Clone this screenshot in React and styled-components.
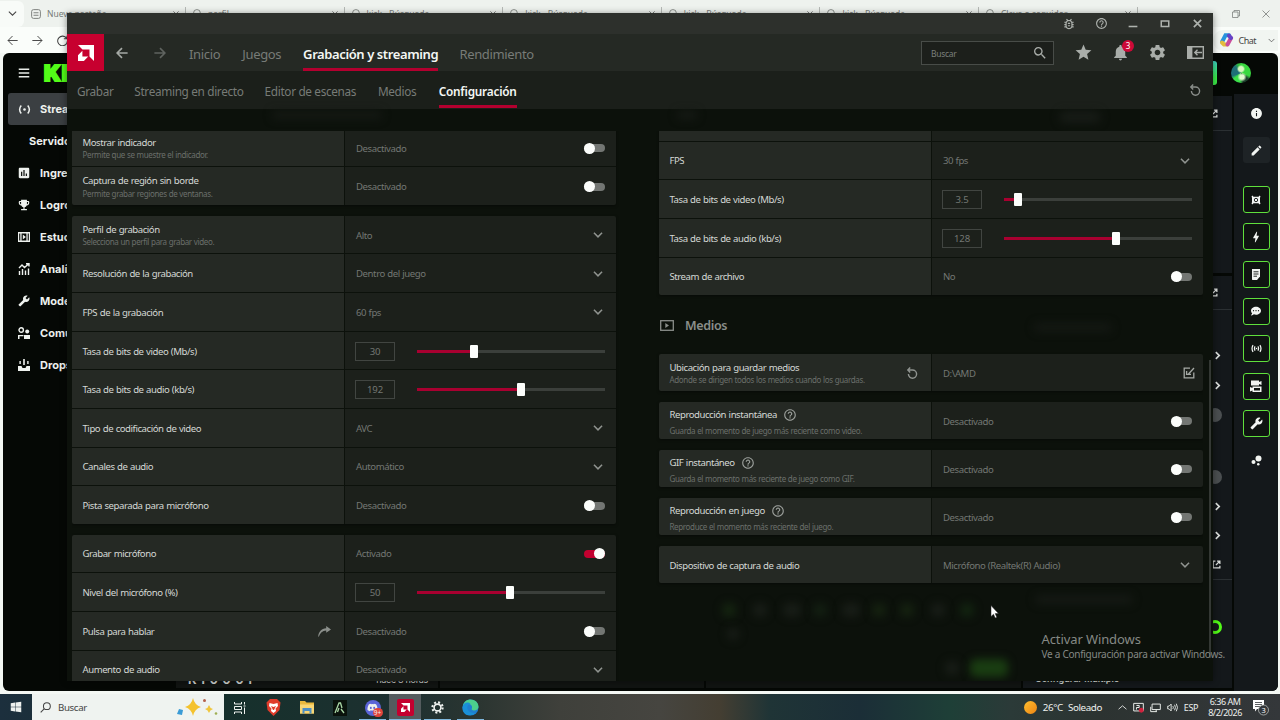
import React from 'react';
import styled, { createGlobalStyle, css } from 'styled-components';
import {
  MdOutlineBugReport,
  MdHelpOutline,
  MdStar,
  MdNotifications,
  MdSettings,
  MdSearch,
  MdInsertChart,
  MdEmojiEvents,
  MdBuild,
  MdEdit,
  MdInfo,
  MdBolt,
  MdBubbleChart,
} from 'react-icons/md';
import { FaDiscord, FaWindows, FaCommentDots } from 'react-icons/fa';

const GlobalStyle = createGlobalStyle`
  * {
    box-sizing: border-box;
  }

  body {
    margin: 0;
    overflow: hidden;
    font-family: 'Noto Sans', 'Open Sans', sans-serif;
  }

  svg {
    display: block;
    flex: none;
  }
`;

const Desktop = styled.div`
  position: relative;
  display: flex;
  flex-direction: column;
  width: 1280px;
  height: 720px;
  overflow: hidden;
  background: #f4f8f4;
`;

/* ---------- browser behind ---------- */

const TabStrip = styled.div`
  display: flex;
  align-items: center;
  height: 27px;
  background: #eef2ee;
  color: #777b78;
  font-size: 8.5px;
`;

const TabMenu = styled.div`
  display: flex;
  align-items: center;
  justify-content: center;
  width: 24px;
  height: 26px;
  background: #f8fbf8;
  color: #444;
  border-radius: 0 6px 6px 0;
`;

const BrowserTab = styled.div`
  display: flex;
  align-items: center;
  gap: 6px;
  width: ${(props) => props.$width || 158.6}px;
  height: 14px;
  padding: 0 6px 0 7px;
  border-right: 1px solid #b5b9b5;

  span {
    flex: 1;
    white-space: nowrap;
  }

  svg:last-child {
    color: #333;
  }
`;

const WindowButtons = styled.div`
  display: flex;
  gap: 22px;
  margin-left: auto;
  padding-right: 10px;
`;

const BrowserBar = styled.div`
  display: flex;
  align-items: center;
  gap: 14px;
  height: 26px;
  padding-left: 7px;
  background: #fafdfa;
  color: #444;
`;

const ChatPill = styled.div`
  display: flex;
  align-items: center;
  gap: 4px;
  height: 21px;
  margin: 0 2px 0 auto;
  padding: 0 3px 0 6px;
  border-radius: 10px 0 0 10px;
  background: #f1f5f1;
  color: #444;
  font-size: 9px;
  letter-spacing: -0.5px;

  svg:last-child {
    margin-left: 8px;
  }
`;

const KickPage = styled.div`
  display: flex;
  flex-direction: column;
  height: 638px;
  margin: 0 2px 3px 3px;
  overflow: hidden;
  border-radius: 6px;
  background: #050805;
  font-family: Inter, sans-serif;
`;

const KickHeader = styled.div`
  display: flex;
  align-items: center;
  height: 41px;
  padding: 0 27px 1px 15px;
  color: #e8ebe8;
`;

const KickLogo = styled.div`
  margin-left: 14px;
  color: #53fc18;
  font-size: 22px;
  font-weight: 900;
  line-height: 24px;
  letter-spacing: 1px;
  -webkit-text-stroke: 2px #53fc18;
`;

const LiveButton = styled.div`
  width: 60px;
  height: 24px;
  margin-left: auto;
  border-radius: 3px;
  background: linear-gradient(#3fd6c6, #3df04a 70%);
`;

const Avatar = styled.div`
  width: 20px;
  height: 20px;
  margin-left: 14px;
  border-radius: 50%;
  background: radial-gradient(circle at 50% 30%, #d8f7c0 0 14%, transparent 24%),
    radial-gradient(circle at 55% 70%, #e2fbd0 0 12%, transparent 26%),
    conic-gradient(#39d83f 0 30%, #1d3f2c 36% 46%, #3be04a 52% 64%, #1f6f78 70% 88%, #35c83a 96%);
`;

const KickBody = styled.div`
  display: flex;
  flex: 1;
  min-height: 0;
`;

const Sidebar = styled.div`
  width: 173px;
  margin-top: -1px;
  padding: 0 0 0 5px;
`;

const SideItem = styled.div`
  display: flex;
  align-items: center;
  gap: 8px;
  height: 32px;
  padding-left: ${(props) => (props.$inset ? 21 : 8)}px;
  border-radius: 3px;
  background: ${(props) => (props.$active ? '#3b3f42' : 'transparent')};
  color: #eef1ee;
  font-size: 11px;
  font-weight: 700;
`;

const SideIcon = styled.div`
  display: flex;
  justify-content: center;
  width: 16px;
`;

const Panel = styled.div`
  display: flex;
  align-items: flex-end;
  justify-content: space-between;
  width: ${(props) => props.$width}px;
  margin: 0 2px 3px 0;
  padding: 0 10px 3px 12px;
  background: #111412;
  color: #d5d8d5;
  font-size: 9px;
  line-height: 10px;
  letter-spacing: -0.3px;

  strong {
    font-size: 12px;
    letter-spacing: 1px;
  }
`;

const ActionColumn = styled.div`
  display: flex;
  flex-direction: column;
  gap: 3px;
  width: 209px;
  margin: 2px 2px 3px 0;
`;

const ActionPanel = styled.div`
  display: flex;
  flex-direction: column;
  height: ${(props) => (props.$height ? `${props.$height}px` : 'auto')};
  flex: ${(props) => (props.$height ? 'none' : 1)};
  padding-right: 10px;
  background: #14181b;
  color: #dfe2df;
  font-size: 9px;
  font-weight: 600;
`;

const ActionRow = styled.div`
  display: flex;
  align-items: center;
  justify-content: flex-end;
  height: ${(props) => props.$height || 29.6}px;
  margin-right: ${(props) => (props.$line ? -10 : 0)}px;
  padding-right: ${(props) => (props.$line ? props.$pad || 10 : 0)}px;
  border-bottom: ${(props) => (props.$line ? '1px solid #2b3033' : 'none')};
`;

const PanelFoot = styled.div`
  margin-top: auto;
  padding: 0 0 4px 12px;
  line-height: 10px;
`;

const Knob = styled.div`
  width: 14px;
  height: 14px;
  border: ${(props) => (props.$on ? '3px solid #53fc18' : 'none')};
  border-radius: 50%;
  background: ${(props) => (props.$on ? 'transparent' : '#4b4f51')};
`;

const Rail = styled.div`
  display: flex;
  flex-direction: column;
  align-items: center;
  gap: 11.3px;
  flex: 1;
  padding-top: 6px;
  background: #14181b;
`;

const RailButton = styled.div`
  display: flex;
  align-items: center;
  justify-content: center;
  width: 27px;
  height: 26px;
  border-radius: 3px;
  color: #f2f5f2;
  ${(props) =>
    props.$outlined &&
    css`
      height: 27px;
      margin-bottom: -1px;
      border: 1px solid #5fe03c;
      background: #0f1411;
    `}
  ${(props) =>
    props.$raised &&
    css`
      margin-bottom: 11.5px;
      background: #1e2326;
    `}
`;

/* ---------- settings window ---------- */

const AppWindow = styled.div`
  position: absolute;
  left: 67px;
  top: 13px;
  display: flex;
  flex-direction: column;
  width: 1146px;
  height: 667.5px;
  overflow: hidden;
  background: #0c110b;
  color: #8a8e8a;
`;

const WindowShadow = styled.div`
  position: absolute;
  left: 67px;
  top: 13px;
  width: 1146px;
  height: 667px;
  box-shadow: 0 1px 7px rgba(0, 0, 0, 0.45);
`;

const TitleBar = styled.div`
  display: flex;
  align-items: center;
  justify-content: flex-end;
  height: 21px;
  background: #2d302c;
  color: #aeb2ae;
`;

const TitleButton = styled.div`
  display: flex;
  justify-content: center;
  width: 32px;
`;

const NavBar = styled.div`
  display: flex;
  align-items: center;
  height: 37px;
  background: #252924;
`;

const Brand = styled.div`
  display: flex;
  align-items: center;
  justify-content: center;
  width: 37px;
  height: 37px;
  margin-right: 12px;
  background: #c7002f;
`;

const Arrow = styled.div`
  width: ${(props) => (props.$dim ? 35 : 38)}px;
  color: ${(props) => (props.$dim ? '#5f635f' : '#a5a9a5')};
`;

const Tab = styled.div`
  display: flex;
  align-items: center;
  width: ${(props) => props.$width}px;
  height: 100%;
  margin-right: 21.3px;
  padding-top: ${(props) => (props.$active ? 5 : 2)}px;
  border-bottom: ${(props) => (props.$active ? '3px solid #b3002f' : 'none')};
  color: ${(props) => (props.$active ? '#f4f7f4' : '#777b77')};
  font-size: ${(props) => (props.$small ? 11.8 : 13)}px;
  font-weight: ${(props) => (props.$active ? 600 : 400)};
  letter-spacing: ${(props) => (props.$active && !props.$small ? -0.4 : props.$active ? -0.22 : -0.34)}px;
  white-space: nowrap;
`;

const NavTools = styled.div`
  display: flex;
  align-items: center;
  margin-left: auto;
  padding-right: 9px;
  gap: 18px;
  color: #a9ada9;

  > svg:last-child {
    margin-left: 2px;
  }
`;

const SearchBox = styled.div`
  display: flex;
  align-items: center;
  justify-content: space-between;
  width: 133px;
  height: 24px;
  margin: 1px 2px 0 0;
  padding: 0 5px 0 9px;
  border: 1px solid #484c48;
  background: #1c1f1b;
  color: #7b7f7b;
  font-size: 8.5px;
  letter-spacing: -0.3px;

  svg {
    color: #a9ada9;
  }
`;

const Bell = styled.div`
  position: relative;
`;

const Badge = styled.div`
  position: absolute;
  right: -4px;
  top: -3px;
  width: 12px;
  height: 12px;
  border-radius: 50%;
  background: #cc0a38;
  color: #fff;
  font-size: 8px;
  line-height: 12px;
  text-align: center;
`;

const SubNav = styled.div`
  display: flex;
  align-items: center;
  height: 38px;
  padding: 0 12px 1px 10px;
  background: #1b1f1a;

  > svg {
    margin-left: auto;
  }
`;

const Content = styled.div`
  position: relative;
  flex: 1;
  min-height: 0;
  padding: 22px 10px 0 5px;
`;

const Viewport = styled.div`
  display: flex;
  gap: 43px;
  height: 550px;
  overflow: hidden;
`;

const Column = styled.div`
  position: relative;
  width: 544px;
  margin-top: ${(props) => props.$shift}px;
`;

const Group = styled.div`
  display: flex;
  flex-direction: column;
  gap: 1px;
  margin-bottom: 10.6px;
  overflow: hidden;
  border-radius: 2px;
  box-shadow: 0 1px 3px rgba(0, 0, 0, 0.4);
`;

const Row = styled.div`
  display: grid;
  grid-template-columns: 272px 271px;
  gap: 1px;
  height: ${(props) => props.$height || 37.67}px;
`;

const LabelCell = styled.div`
  display: flex;
  align-items: center;
  justify-content: space-between;
  padding: 1px 13px 0 10.5px;
  background: #252924;
  color: #8f938f;
`;

const Name = styled.div`
  display: flex;
  align-items: center;
  gap: 6px;
  height: 14px;
  color: #d4d8d4;
  font-size: 9.6px;
  letter-spacing: -0.46px;
  word-spacing: 0.5px;
  white-space: nowrap;

  svg {
    color: #9a9e9a;
  }
`;

const Hint = styled.div`
  height: 12px;
  margin-top: ${(props) => (props.$low ? 3 : 0)}px;
  margin-bottom: ${(props) => (props.$low ? -2 : 0)}px;
  color: #6b6f6b;
  font-size: 8px;
  line-height: 12px;
  letter-spacing: -0.36px;
  word-spacing: 0.3px;
  white-space: nowrap;
`;

const ValueCell = styled.div`
  display: flex;
  align-items: center;
  justify-content: space-between;
  padding: 1px 11px 0;
  background: #1c201b;
  color: #737773;
  font-size: 9.6px;
  letter-spacing: -0.42px;
  word-spacing: 0.3px;
`;

const SelectArrow = styled.div`
  margin-right: 2.5px;
  color: #8f938f;
`;

const FolderButton = styled.div`
  margin-right: -3px;
  color: #a5a9a5;
`;

const Switch = styled.div`
  display: flex;
  align-items: center;
  justify-content: ${(props) => (props.$on ? 'flex-end' : 'flex-start')};
  width: 21px;
  height: 8px;
  border-radius: 4px;
  background: ${(props) => (props.$on ? '#c2002f' : '#737673')};

  &::after {
    content: '';
    width: 11px;
    height: 11px;
    border-radius: 50%;
    background: #fbfdfb;
  }
`;

const NumberBox = styled.div`
  display: flex;
  align-items: center;
  justify-content: center;
  width: 40px;
  height: 19px;
  margin-left: -1px;
  border: 1px solid #414541;
  letter-spacing: -0.2px;
`;

const Track = styled.div`
  display: flex;
  align-items: center;
  width: 188px;
  height: 13px;
  background: linear-gradient(#3b3f3b, #3b3f3b) center / 100% 3px no-repeat;
`;

const Filled = styled.div`
  height: 3px;
  background: #a80030;
`;

const Thumb = styled.div`
  width: 8px;
  height: 13px;
  border-radius: 1px;
  background: #fbfdfb;
`;

const SectionTitle = styled.div`
  display: flex;
  align-items: center;
  gap: 11px;
  height: 38px;
  margin-bottom: 10px;
  padding: 1px 0 0 1px;
  color: #8a8e8a;
  font-size: 12.5px;
  font-weight: 600;
  letter-spacing: -0.35px;
`;

const ScrollThumb = styled.div`
  position: absolute;
  right: 2px;
  top: 251px;
  width: 2px;
  height: 298px;
  background: #343834;
`;

const Glow = styled.div`
  position: absolute;
  left: ${(props) => props.$x}px;
  top: ${(props) => props.$y}px;
  width: ${(props) => props.$w || 14}px;
  height: ${(props) => props.$h || 14}px;
  border-radius: 6px;
  background: ${(props) => props.$color || '#181d17'};
  filter: blur(4px);
`;

/* ---------- taskbar ---------- */

const TaskBar = styled.div`
  display: flex;
  align-items: center;
  height: 26px;
  background: linear-gradient(
    90deg,
    #1c2f3d 0,
    #16302c 224px,
    #1d3030 400px,
    #2b3531 480px,
    #3f403b 560px,
    #464540 660px,
    #443e32 720px,
    #1f3436 770px,
    #1b2e37 860px,
    #1e3f37 950px,
    #2b3a38 1010px,
    #2c3331 1100px,
    #34373a 1280px
  );
  color: #eef1ee;
`;

const StartButton = styled.div`
  display: flex;
  align-items: center;
  justify-content: center;
  width: 32px;
`;

const TaskSearch = styled.div`
  display: flex;
  align-items: center;
  gap: 7px;
  width: 192px;
  height: 26px;
  padding: 0 6px 0 8px;
  background: #eff3f0;
  color: #444;
  font-size: 9.7px;
  letter-spacing: -0.35px;

  svg:last-child {
    margin-left: auto;
  }
`;

const TaskItem = styled.div`
  display: flex;
  align-items: center;
  justify-content: center;
  width: ${(props) => props.$width || 33}px;
  height: 26px;
  padding-top: 1px;
  ${(props) =>
    props.$open &&
    css`
      background: linear-gradient(#7fb8dd, #7fb8dd) center bottom / 27px 1px no-repeat;
    `}
  ${(props) =>
    props.$focused &&
    css`
      border-bottom: 1px solid #7fb8dd;
      background: #545c5e;
    `}
`;

const DiscordIcon = styled.div`
  position: relative;
  display: flex;
  align-items: center;
  justify-content: center;
  width: 16px;
  height: 16px;
  border-radius: 50%;
  background: #5b65d8;

  span {
    position: absolute;
    right: -2px;
    bottom: -1px;
    width: 10px;
    height: 9px;
    border-radius: 5px;
    background: #e0443c;
    font-size: 6.5px;
    line-height: 9px;
    text-align: center;
  }
`;

const AmdTile = styled.div`
  display: flex;
  align-items: center;
  justify-content: center;
  width: 17px;
  height: 17px;
  border-radius: 2px;
  background: #c4002f;
`;

const AdrenalinTile = styled.div`
  width: 14px;
  height: 16px;
  background: #0a120c;
`;

const Tray = styled.div`
  display: flex;
  align-items: center;
  gap: 6px;
  margin-left: auto;
  padding-right: 10px;
  font-size: 9px;
  letter-spacing: -0.4px;
  white-space: nowrap;
`;

const Sun = styled.div`
  width: 13px;
  height: 13px;
  border-radius: 50%;
  background: linear-gradient(135deg, #ffbf2e, #ee8414);
`;

const Weather = styled.span`
  width: 69px;
  font-size: 9.8px;
  word-spacing: 3px;
`;

const Clock = styled.div`
  display: flex;
  flex-direction: column;
  align-items: center;
  width: 34px;
  margin: 0 4px;
  font-size: 9px;
  line-height: 11.5px;
  letter-spacing: -0.5px;
`;

/* ---------- overlays ---------- */

const Watermark = styled.div`
  position: absolute;
  left: 1041.5px;
  top: 630px;
  color: #858985;
  font-size: 10px;
  line-height: 12px;
  letter-spacing: -0.27px;
  white-space: nowrap;

  strong {
    display: block;
    font-size: 13px;
    font-weight: 400;
    line-height: 18px;
    letter-spacing: -0.1px;
  }
`;

const Pointer = styled.svg`
  position: absolute;
  left: 990px;
  top: 605px;
`;

/* ---------- icons ---------- */

const Stroke = ({ size = 12, box = 16, weight = 1.5, children }) => (
  <svg
    width={size}
    height={size}
    viewBox={`0 0 ${box} ${box}`}
    fill='none'
    stroke='currentColor'
    strokeWidth={weight}
  >
    {children}
  </svg>
);

const AmdMark = ({ size }) => (
  <svg width={size} height={size} viewBox='0 0 16 16' fill='#fff'>
    <path d='M0 0H16V16L11.5 11.5V4.5H4.5Z' />
    <path d='M4.4 5.8V11.6H10.2L5.9 16H0V10.2Z' />
  </svg>
);

const ChevronIcon = ({ size = 10, weight = 2.4 }) => (
  <Stroke size={size} weight={weight}>
    <path d='M1.5 4.5L8 11L14.5 4.5' />
  </Stroke>
);

const ChevronRight = () => (
  <Stroke size={9} weight={3}>
    <path d='M5 2L11 8L5 14' />
  </Stroke>
);

const CloseIcon = ({ size = 8, weight = 1.6 }) => (
  <Stroke size={size} weight={weight}>
    <path d='M1 1L15 15M15 1L1 15' />
  </Stroke>
);

const BackIcon = ({ size = 12, weight = 2.2 }) => (
  <Stroke size={size} weight={weight}>
    <path d='M15.5 8H1.5M8 1.5L1.5 8L8 14.5' />
  </Stroke>
);

const ForwardIcon = ({ size = 12, weight = 2.2 }) => (
  <Stroke size={size} weight={weight}>
    <path d='M.5 8H14.5M8 1.5L14.5 8L8 14.5' />
  </Stroke>
);

const ResetIcon = () => (
  <Stroke size={12} box={12} weight={1.4}>
    <path d='M1.8 3H6.5A4.1 4.1 0 1 1 2.4 7.1M4.2 .6L1.8 3L4.2 5.4' />
  </Stroke>
);

const PopOutIcon = () => (
  <Stroke size={9} weight={2.2}>
    <path d='M6 2H2V14H14V10M9 2H14V7M14 2L7 9' />
  </Stroke>
);

const BroadcastIcon = ({ size = 13 }) => (
  <Stroke size={size} weight={1.8}>
    <path d='M4 3Q0 8 4 13M12 3Q16 8 12 13' />
    <circle cx='8' cy='8' r='1.6' fill='currentColor' stroke='none' />
  </Stroke>
);

const MicIcon = () => (
  <Stroke size={11} weight={1.8}>
    <path d='M3 3Q0 8 3 13M13 3Q16 8 13 13M6 5Q4 8 6 11M10 5Q12 8 10 11' />
    <circle cx='8' cy='8' r='1.2' fill='currentColor' stroke='none' />
  </Stroke>
);

const FilmIcon = () => (
  <svg width='12' height='10' viewBox='0 0 12 10' fill='currentColor'>
    <path fillRule='evenodd' d='M0 0H12V10H0ZM1.2 1.5V8.5H2.3V1.5ZM3.6 1.5V8.5H8.4V1.5ZM9.7 1.5V8.5H10.8V1.5Z' />
    <path d='M4.8 2.6L7.8 5L4.8 7.4Z' />
  </svg>
);

const AnalyticsIcon = () => (
  <Stroke size={12} box={12} weight={1.4}>
    <path d='M1 5L4 2L6.5 4.5L10.5 1M8 .7H11V3.6M1.5 12V8M4.5 12V6M7.5 12V7.5M10.5 12V5.5' />
  </Stroke>
);

const CommunityIcon = () => (
  <svg width='12' height='12' viewBox='0 0 12 12' fill='currentColor'>
    <path d='M0 8H5.5V9.3H1.5V12H0ZM6 8H12V12H6Z' />
    <circle cx='3.2' cy='3' r='2.2' fill='none' stroke='currentColor' strokeWidth='1.4' />
    <circle cx='9.2' cy='4.4' r='2' />
  </svg>
);

const DropsIcon = () => (
  <svg width='12' height='12' viewBox='0 0 12 12' fill='currentColor'>
    <path d='M0 7H3.5L4.5 9H7.5L8.5 7H12V12H0ZM5.2 0H6.8V6H5.2ZM1.4 2H2.8V5H1.4ZM9.2 2H10.6V5H9.2Z' />
  </svg>
);

const CameraIcon = () => (
  <svg width='12' height='12' viewBox='0 0 12 12' fill='currentColor'>
    <path d='M1.5 2.5L2.5 1.5L3.5 2.7H8.5L9.5 1.5L10.5 2.5L10 3.7V8.3L10.5 9.5L9.5 10.5L8.5 9.3H3.5L2.5 10.5L1.5 9.5L2 8.3V3.7Z' />
    <circle cx='6' cy='6' r='1.7' fill='none' stroke='#0f1411' strokeWidth='.9' />
  </svg>
);

const NoteIcon = () => (
  <svg width='10' height='11' viewBox='0 0 10 11'>
    <path d='M1 0H9V7.5L6 11H1.5L1 10.5Z' fill='currentColor' />
    <path d='M2.5 2.8H7.5M2.5 5H7.5M2.5 7.2H6' stroke='#0f1411' strokeWidth='.9' />
  </svg>
);

const ScenesIcon = () => (
  <svg width='12' height='12' viewBox='0 0 12 12' fill='currentColor'>
    <path d='M1 .5H9V2L11.5 1V5L9 4V5.5H1ZM0 7L2.5 8V6.5H11.5V12H2.5V10.5L0 11.5ZM4 8V10.5H10V8Z' fillRule='evenodd' />
  </svg>
);

const DockIcon = () => (
  <svg width='17' height='13' viewBox='0 0 17 13' fill='none' stroke='currentColor' strokeWidth='1.4'>
    <path d='M.7 .7H16.3V12.3H.7ZM15 6.5H8M10.5 3.8L7.8 6.5L10.5 9.2' />
    <path d='M0 0H5.4V13H0Z' fill='currentColor' stroke='none' />
  </svg>
);

const MediaIcon = () => (
  <svg width='14' height='11' viewBox='0 0 14 11'>
    <rect x='.7' y='.7' width='12.6' height='9.6' fill='none' stroke='currentColor' strokeWidth='1.3' />
    <path d='M5.3 3L9 5.5L5.3 8Z' fill='currentColor' />
  </svg>
);

const SaveToIcon = () => (
  <Stroke size={12} box={12} weight={1.3}>
    <path d='M7 1.2H1.2V10.8H10.8V5.5M11 1L5.5 7M3.6 4V7.4H8' />
  </Stroke>
);

const ShareArrow = () => (
  <svg width='13' height='11' viewBox='0 0 13 11' fill='#8b8f8b'>
    <path d='M8.2 0L13 3.4L8.2 6.8V4.6C4.5 4.8 2 7 .8 10.8L.2 10.6C.6 5.8 3.4 2.6 8.2 2.3Z' />
  </svg>
);

const CopilotIcon = () => (
  <svg width='15' height='14' viewBox='0 0 15 14' fill='none' strokeWidth='4' strokeLinecap='round'>
    <path d='M10 2.3H6.5L3 9' stroke='#2793dc' />
    <path d='M3 9.5L5 11.5H8' stroke='#e3bd3c' />
    <path d='M8.5 11.5L12 5' stroke='#c84c9c' />
    <path d='M10 2.5L12 5' stroke='#6542c5' />
  </svg>
);

const SparkleArt = () => (
  <svg width='42' height='18' viewBox='0 0 42 18'>
    <path d='M17 0Q18.5 7 25 9Q18.5 11 17 18Q15.5 11 9 9Q15.5 7 17 0Z' fill='#f4c22e' />
    <path d='M33 7Q33.8 10.2 37 11Q33.8 11.8 33 15Q32.2 11.8 29 11Q32.2 10.2 33 7Z' fill='#f0c63c' />
    <path d='M3 11L7 12L6 17L1 16Z' fill='#3a9bd6' />
    <circle cx='28.5' cy='2.5' r='1.5' fill='#b5604a' />
    <circle cx='40' cy='15.5' r='1.3' fill='#9fae54' />
  </svg>
);

const TaskViewIcon = () => (
  <Stroke size={12} box={12} weight={1}>
    <path d='M.5 0V2H7.5V0M.5 12V10H7.5V12M.5 4.5H7.5V7.5H.5ZM10.5 0V2.5M10.5 5.5V12M9.5 4H11.5' />
  </Stroke>
);

const BraveIcon = () => (
  <svg width='15' height='17' viewBox='0 0 15 17'>
    <path d='M4 0H11L14.5 3.5L13.5 11L7.5 17L1.5 11L.5 3.5Z' fill='#df3b2b' />
    <path d='M3.5 4L7.5 5L11.5 4L12 7L9.5 9.5L10 12L7.5 14L5 12L5.5 9.5L3 7Z' fill='#fff' />
    <path d='M5 7L7.5 8L10 7L8 11H7Z' fill='#df3b2b' />
  </svg>
);

const FolderIcon = () => (
  <svg width='16' height='13' viewBox='0 0 16 13'>
    <path d='M1 0H6L7.5 1.5H15V12.5H1Z' fill='#e9b93e' />
    <path d='M1 3.5H15V12.5H1Z' fill='#f8d775' />
    <path d='M3.5 7H12.5V12.5H10.5V10H5.5V12.5H3.5Z' fill='#4d8fc4' />
  </svg>
);

const SlashIcon = () => (
  <svg width='14' height='16' viewBox='0 0 14 16' fill='none' stroke='#a9d6a5' strokeWidth='1.3'>
    <path d='M2 13L6 3H7.5L9 8M8 9L11 13M6 8L4.5 12' />
  </svg>
);

const EdgeIcon = () => (
  <svg width='17' height='17' viewBox='0 0 17 17'>
    <circle cx='8.5' cy='8.5' r='8' fill='#1f7fd0' />
    <path d='M.8 7C2 2.5 5 .5 8.5 .5C13 .5 16.5 3.8 16.5 7.5C16.5 10 14.5 11.5 12 11.5C10 11.5 9 10.5 10 9C10.5 6.5 8.5 5 6 5C3.8 5 2 5.8 .8 7Z' fill='#4ccf8d' />
    <path d='M.8 7C2 3.5 6 2.5 8.5 5C5 5.5 4.8 9 6 11C7.5 13.8 11 14.5 14 13.8C9 18.5 0 16.5 .5 8.5Z' fill='#1a90d8' />
  </svg>
);

const NoticeIcon = () => (
  <svg width='18' height='17' viewBox='0 0 18 17'>
    <path d='M1 1H12V10H5L3 12.5V10H1Z' fill='#fff' />
    <path d='M3 3.5H10M3 5.5H10M3 7.5H8' stroke='#34373a' strokeWidth='.8' />
    <circle cx='11.5' cy='11' r='5' fill='#34373a' stroke='#b6bab8' strokeWidth='.8' />
    <text x='11.5' y='13.6' fill='#fff' fontSize='7.5' textAnchor='middle'>3</text>
  </svg>
);

/* ---------- data ---------- */

const browserTabs = ['perfil', 'kick - Búsqueda', 'kick - Búsqueda', 'kick - Búsqueda', 'kick - Búsqueda', 'Clave o seguidor'];

const sideItems = [
  { text: 'Strea', icon: <BroadcastIcon />, active: true },
  { text: 'Servido' },
  { text: 'Ingre', icon: <MdInsertChart size={14} /> },
  { text: 'Logro', icon: <MdEmojiEvents size={14} /> },
  { text: 'Estud', icon: <FilmIcon /> },
  { text: 'Analí', icon: <AnalyticsIcon /> },
  { text: 'Mode', icon: <MdBuild size={12} transform='scale(-1,1)' /> },
  { text: 'Comu', icon: <CommunityIcon /> },
  { text: 'Drops', icon: <DropsIcon /> },
];

const railItems = [
  <CameraIcon />,
  <MdBolt size={14} />,
  <NoteIcon />,
  <FaCommentDots size={10} />,
  <MicIcon />,
  <ScenesIcon />,
  <MdBuild size={13} transform='scale(-1,1)' />,
];

const indicatorRows = [
  { name: 'Mostrar indicador', hint: 'Permite que se muestre el indicador.', value: 'Desactivado', type: 'switch' },
  { name: 'Captura de región sin borde', hint: 'Permite grabar regiones de ventanas.', value: 'Desactivado', type: 'switch' },
];

const recordingRows = [
  { name: 'Perfil de grabación', hint: 'Selecciona un perfil para grabar video.', value: 'Alto', type: 'select' },
  { name: 'Resolución de la grabación', value: 'Dentro del juego', type: 'select' },
  { name: 'FPS de la grabación', value: '60 fps', type: 'select' },
  { name: 'Tasa de bits de video (Mb/s)', value: '30', type: 'slider', percent: 30.3 },
  { name: 'Tasa de bits de audio (kb/s)', value: '192', type: 'slider', percent: 55.5 },
  { name: 'Tipo de codificación de video', value: 'AVC', type: 'select' },
  { name: 'Canales de audio', value: 'Automático', type: 'select' },
  { name: 'Pista separada para micrófono', value: 'Desactivado', type: 'switch' },
];

const micRows = [
  { name: 'Grabar micrófono', value: 'Activado', type: 'switch', on: true },
  { name: 'Nivel del micrófono (%)', value: '50', type: 'slider', percent: 49.7 },
  { name: 'Pulsa para hablar', value: 'Desactivado', type: 'switch', action: <ShareArrow /> },
  { name: 'Aumento de audio', value: 'Desactivado', type: 'select' },
];

const streamRows = [
  { name: '', value: '', type: 'none' },
  { name: 'FPS', value: '30 fps', type: 'select' },
  { name: 'Tasa de bits de video (Mb/s)', value: '3.5', type: 'slider', percent: 7.2 },
  { name: 'Tasa de bits de audio (kb/s)', value: '128', type: 'slider', percent: 59.8 },
  { name: 'Stream de archivo', value: 'No', type: 'switch' },
];

const mediaRows = [
  {
    name: 'Ubicación para guardar medios',
    hint: 'Adonde se dirigen todos los medios cuando los guardas.',
    value: 'D:\\AMD',
    type: 'folder',
    action: <ResetIcon />,
  },
  { name: 'Reproducción instantánea', hint: 'Guarda el momento de juego más reciente como video.', value: 'Desactivado', type: 'switch', help: true },
  { name: 'GIF instantáneo', hint: 'Guarda el momento más reciente de juego como GIF.', value: 'Desactivado', type: 'switch', help: true },
  { name: 'Reproducción en juego', hint: 'Reproduce el momento más reciente del juego.', value: 'Desactivado', type: 'switch', help: true },
  { name: 'Dispositivo de captura de audio', value: 'Micrófono (Realtek(R) Audio)', type: 'select' },
];

const SettingValue = ({ row }) => {
  if (row.type === 'slider') {
    return (
      <ValueCell>
        <NumberBox>{row.value}</NumberBox>
        <Track>
          <Filled style={{ width: `calc(${row.percent}% - 4px)` }} />
          <Thumb />
        </Track>
      </ValueCell>
    );
  }

  return (
    <ValueCell>
      <span>{row.value}</span>
      {row.type === 'switch' && <Switch $on={row.on} />}
      {row.type === 'folder' && (
        <FolderButton>
          <SaveToIcon />
        </FolderButton>
      )}
      {row.type === 'select' && (
        <SelectArrow>
          <ChevronIcon />
        </SelectArrow>
      )}
    </ValueCell>
  );
};

const SettingRow = ({ row, height }) => (
  <Row $height={height}>
    <LabelCell>
      <div>
        <Name>
          {row.name}
          {row.help && <MdHelpOutline size={14} />}
        </Name>
        {row.hint && <Hint $low={row.help}>{row.hint}</Hint>}
      </div>
      {row.action}
    </LabelCell>
    <SettingValue row={row} />
  </Row>
);

const SettingGroup = ({ rows, height }) => (
  <Group>
    {rows.map((row) => (
      <SettingRow key={row.name} row={row} height={height} />
    ))}
  </Group>
);

const Browser = () => (
  <>
    <TabStrip>
      <TabMenu>
        <ChevronIcon size={9} weight={1.8} />
      </TabMenu>
      <BrowserTab $width={162}>
        <Stroke size={10}>
          <rect x='1' y='1' width='14' height='14' rx='3' />
          <path d='M4 6H12M4 10H12' />
        </Stroke>
        <span>Nueva pestaña</span>
        <CloseIcon size={6} />
      </BrowserTab>
      {browserTabs.map((title, index) => (
        <BrowserTab key={index}>
          <Stroke size={9}>
            <circle cx='7' cy='7' r='6' />
            <path d='M11 11L15 15' />
          </Stroke>
          <span>{title}</span>
          <CloseIcon size={6} />
        </BrowserTab>
      ))}
      <WindowButtons>
        <Stroke size={8}>
          <path d='M1 4H12V15H1ZM4 4V1H15V12H12' />
        </Stroke>
        <CloseIcon />
      </WindowButtons>
    </TabStrip>
    <BrowserBar>
      <BackIcon size={11} weight={1.4} />
      <ForwardIcon size={11} weight={1.4} />
      <Stroke size={11}>
        <path d='M14 5A7 7 0 1 0 15 9M14.5 1V5.5H10' />
      </Stroke>
      <ChatPill>
        <CopilotIcon />
        Chat
        <ChevronIcon size={7} weight={1.6} />
      </ChatPill>
    </BrowserBar>
    <KickPage>
      <KickHeader>
        <Stroke size={12} weight={2}>
          <path d='M1 3H15M1 8H15M1 13H15' />
        </Stroke>
        <KickLogo>KI</KickLogo>
        <LiveButton />
        <Avatar />
      </KickHeader>
      <KickBody>
        <Sidebar>
          {sideItems.map((item) => (
            <SideItem key={item.text} $active={item.active} $inset={!item.icon}>
              {item.icon && <SideIcon>{item.icon}</SideIcon>}
              {item.text}
            </SideItem>
          ))}
        </Sidebar>
        <Panel $width={262}>
          <strong>K I 0 0 0 I</strong>
          hace 3 horas
        </Panel>
        <Panel $width={264} />
        <Panel $width={315} />
        <ActionColumn>
          <ActionPanel $height={177}>
            <ActionRow $height={35} $line $pad={14}>
              <PopOutIcon />
            </ActionRow>
          </ActionPanel>
          <ActionPanel>
            <ActionRow $height={34} $line $pad={14}>
              <PopOutIcon />
            </ActionRow>
            <ActionRow $height={31} />
            <ActionRow>
              <ChevronRight />
            </ActionRow>
            <ActionRow>
              <ChevronRight />
            </ActionRow>
            <ActionRow>
              <Knob />
            </ActionRow>
            <ActionRow $height={32} />
            <ActionRow>
              <Knob />
            </ActionRow>
            <ActionRow>
              <ChevronRight />
            </ActionRow>
            <ActionRow>
              <ChevronRight />
            </ActionRow>
            <ActionRow $line $pad={11}>
              <PopOutIcon />
            </ActionRow>
            <ActionRow $height={32} />
            <ActionRow>
              <Knob $on />
            </ActionRow>
            <PanelFoot>Configurar múltiple</PanelFoot>
          </ActionPanel>
        </ActionColumn>
        <Rail>
          <RailButton>
            <MdInfo size={13} />
          </RailButton>
          <RailButton $raised>
            <MdEdit size={13} />
          </RailButton>
          {railItems.map((icon, index) => (
            <RailButton key={index} $outlined>
              {icon}
            </RailButton>
          ))}
          <RailButton>
            <MdBubbleChart size={15} />
          </RailButton>
        </Rail>
      </KickBody>
    </KickPage>
  </>
);

const SettingsWindow = () => (
  <AppWindow>
    <TitleBar>
      <TitleButton>
        <MdOutlineBugReport size={14} />
      </TitleButton>
      <TitleButton>
        <MdHelpOutline size={13} />
      </TitleButton>
      <TitleButton>
        <Stroke size={10}>
          <path d='M1 12H15' strokeWidth='2.5' />
        </Stroke>
      </TitleButton>
      <TitleButton>
        <Stroke size={10} weight={2.4}>
          <path d='M2 3H14V12H2Z' />
        </Stroke>
      </TitleButton>
      <TitleButton>
        <Stroke size={13} weight={2}>
          <path d='M3.5 3.5L12.5 12.5M12.5 3.5L3.5 12.5' />
        </Stroke>
      </TitleButton>
    </TitleBar>
    <NavBar>
      <Brand>
        <AmdMark size={16} />
      </Brand>
      <Arrow>
        <BackIcon />
      </Arrow>
      <Arrow $dim>
        <ForwardIcon />
      </Arrow>
      <Tab $width={32}>Inicio</Tab>
      <Tab $width={39.5}>Juegos</Tab>
      <Tab $width={135} $active>Grabación y streaming</Tab>
      <Tab $width={74}>Rendimiento</Tab>
      <NavTools>
        <SearchBox>
          Buscar
          <MdSearch size={16} />
        </SearchBox>
        <MdStar size={19} />
        <Bell>
          <MdNotifications size={19} />
          <Badge>3</Badge>
        </Bell>
        <MdSettings size={19} />
        <DockIcon />
      </NavTools>
    </NavBar>
    <SubNav>
      <Tab $small $width={36}>Grabar</Tab>
      <Tab $small $width={109}>Streaming en directo</Tab>
      <Tab $small $width={92}>Editor de escenas</Tab>
      <Tab $small $width={39.5}>Medios</Tab>
      <Tab $small $width={78.5} $active>Configuración</Tab>
      <ResetIcon />
    </SubNav>
    <Content>
      <Glow $x={205} $y={2} $w={110} $h={8} $color='#151914' />
      <Glow $x={610} $y={2} $w={20} $h={8} $color='#161a15' />
      <Glow $x={992} $y={2} $w={42} $h={12} $color='#171b16' />
      <Glow $x={967} $y={214} $w={78} $h={9} $color='#141813' />
      <Glow $x={655} $y={494} $color='#142410' />
      <Glow $x={686} $y={494} />
      <Glow $x={716} $y={494} $w={18} />
      <Glow $x={746} $y={494} $color='#131f12' />
      <Glow $x={775} $y={494} $w={18} />
      <Glow $x={805} $y={494} $color='#152210' />
      <Glow $x={833} $y={494} $color='#152210' />
      <Glow $x={864} $y={494} />
      <Glow $x={893} $y={494} $color='#122410' />
      <Glow $x={660} $y={519} $w={12} $h={12} />
      <Glow $x={968} $y={486} $w={98} $h={9} $color='#151914' />
      <Glow $x={903} $y={550} $w={38} $h={18} $color='#1a3d12' />
      <Glow $x={878} $y={552} />
      <Viewport>
        <Column $shift={-2.2}>
          <SettingGroup rows={indicatorRows} />
          <SettingGroup rows={recordingRows} />
          <SettingGroup rows={micRows} />
        </Column>
        <Column $shift={-28}>
          <SettingGroup rows={streamRows} />
          <SectionTitle>
            <MediaIcon />
            Medios
          </SectionTitle>
          {mediaRows.map((row) => (
            <SettingGroup key={row.name} rows={[row]} height={37.4} />
          ))}
        </Column>
      </Viewport>
      <ScrollThumb />
    </Content>
  </AppWindow>
);

const Taskbar = () => (
  <TaskBar>
    <StartButton>
      <FaWindows size={12} />
    </StartButton>
    <TaskSearch>
      <Stroke size={11}>
        <circle cx='10' cy='6' r='5' />
        <path d='M6 10L1 15' />
      </Stroke>
      Buscar
      <SparkleArt />
    </TaskSearch>
    <TaskItem $width={32}>
      <TaskViewIcon />
    </TaskItem>
    <TaskItem $width={34}>
      <BraveIcon />
    </TaskItem>
    <TaskItem>
      <FolderIcon />
    </TaskItem>
    <TaskItem>
      <AdrenalinTile>
        <SlashIcon />
      </AdrenalinTile>
    </TaskItem>
    <TaskItem $open>
      <DiscordIcon>
        <FaDiscord size={11} />
        <span>9+</span>
      </DiscordIcon>
    </TaskItem>
    <TaskItem $width={32} $focused>
      <AmdTile>
        <AmdMark size={9} />
      </AmdTile>
    </TaskItem>
    <TaskItem $open>
      <Stroke size={13} weight={2}>
        <circle cx='8' cy='8' r='4.2' />
        <circle cx='8' cy='8' r='6.3' strokeWidth='2.6' strokeDasharray='2.47 2.47' />
      </Stroke>
    </TaskItem>
    <TaskItem $open>
      <EdgeIcon />
    </TaskItem>
    <Tray>
      <Sun />
      <Weather>26°C Soleado</Weather>
      <Stroke size={9}>
        <path d='M1 11L8 5L15 11' />
      </Stroke>
      <Stroke size={11} weight={1.4}>
        <path d='M1 2H15V13H1ZM5 5H9V8H5V11' />
        <circle cx='12' cy='12' r='3.5' fill='#d0213c' stroke='none' />
      </Stroke>
      <Stroke size={11} weight={1.4}>
        <path d='M3 3H15V11H3ZM1 7V14H10M9 11V14' />
      </Stroke>
      <Stroke size={11} weight={1.3}>
        <path d='M1 6H3L6 3V13L3 10H1ZM8.5 6Q10 8 8.5 10M11 4Q13.5 8 11 12M13.5 2.5Q17 8 13.5 13.5' />
      </Stroke>
      ESP
      <Clock>
        <span>6:36 AM</span>
        <span>8/2/2026</span>
      </Clock>
      <NoticeIcon />
    </Tray>
  </TaskBar>
);

const App = () => (
  <Desktop>
    <GlobalStyle />
    <Browser />
    <Taskbar />
    <WindowShadow />
    <SettingsWindow />
    <Watermark>
      <strong>Activar Windows</strong>
      Ve a Configuración para activar Windows.
    </Watermark>
    <Pointer width='9' height='14' viewBox='0 0 9 14'>
      <path d='M1 .5V11.5L3.5 9.2L5.2 13L6.8 12.2L5.2 8.6H8.5Z' fill='#fff' stroke='#222' strokeWidth='.5' />
    </Pointer>
  </Desktop>
);

export default App;
